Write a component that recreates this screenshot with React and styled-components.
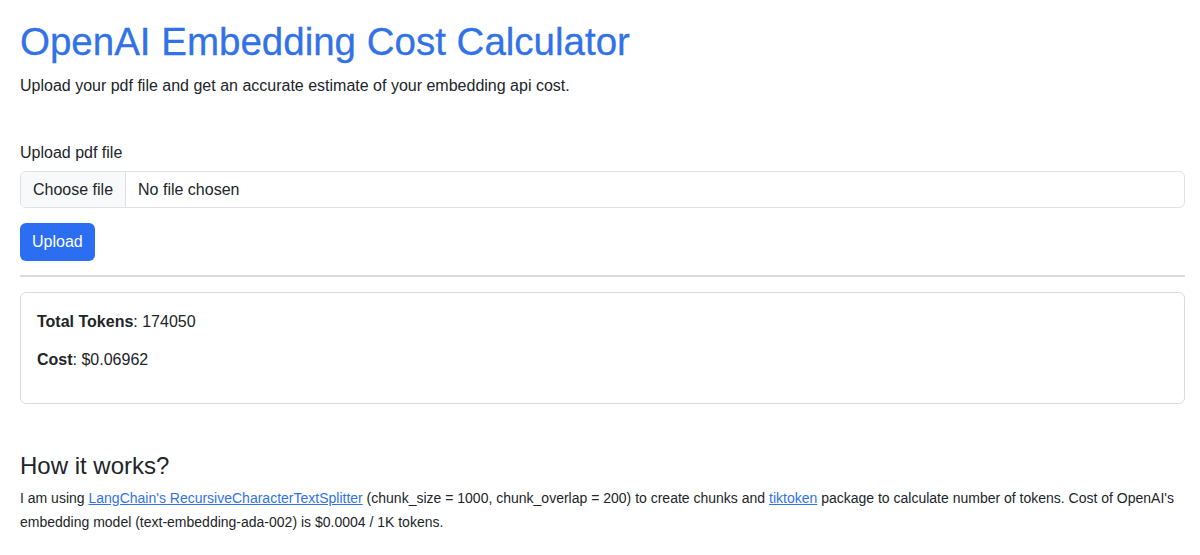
import React from "react";
import styled, { createGlobalStyle } from "styled-components";

const Global = createGlobalStyle`
  html, body { margin: 0; padding: 0; background: #fff; }
  body {
    font-family: "Liberation Sans", Arial, sans-serif;
    color: #212529;
    -webkit-font-smoothing: antialiased;
  }
  * { box-sizing: border-box; }
`;

const Page = styled.main`
  padding: 18px 15px 0 20px;
  display: flex;
  flex-direction: column;
`;

const Title = styled.h1`
  margin: 0;
  font-size: 38.5px;
  font-weight: 400;
  line-height: 48px;
  color: #3272e8;
  -webkit-text-stroke: 0.3px #3272e8;
`;

const Lead = styled.p`
  margin: 8px 0 0;
  font-size: 16px;
  line-height: 24px;
`;

const Form = styled.form`
  margin-top: 43px;
  display: flex;
  flex-direction: column;
`;

const Label = styled.label`
  font-size: 16px;
  line-height: 24px;
  margin-bottom: 6px;
`;

const FileInput = styled.div`
  display: flex;
  height: 37px;
  border: 1px solid #dee2e6;
  border-radius: 6px;
  overflow: hidden;
  font-size: 16px;
`;

const ChooseButton = styled.span`
  display: flex;
  align-items: center;
  padding: 0 12px;
  background: #f8f9fa;
  border-right: 1px solid #dee2e6;
`;

const FileName = styled.span`
  display: flex;
  align-items: center;
  padding: 0 12px;
`;

const PrimaryButton = styled.button`
  margin-top: 15px;
  align-self: flex-start;
  height: 38px;
  padding: 0 12px;
  border: none;
  border-radius: 6px;
  background: #2b6ef2;
  color: #fff;
  font-family: inherit;
  font-size: 16px;
`;

const Rule = styled.hr`
  margin: 14px 0 0;
  border: 0;
  border-top: 2px solid #dcdcdc;
`;

const Card = styled.section`
  margin-top: 15px;
  border: 1px solid #dcdcdc;
  border-radius: 6px;
  padding: 17px 16px 18px;
`;

const Stats = styled.div`
  display: flex;
  flex-direction: column;
  gap: 14px;
  padding-bottom: 13px;
`;

const Stat = styled.p`
  margin: 0;
  font-size: 16px;
  line-height: 24px;
  b { font-weight: 700; }
`;

const Heading = styled.h2`
  margin: 47px 0 0;
  font-size: 24px;
  font-weight: 400;
  line-height: 30px;
`;

const Body = styled.p`
  margin: 5px 0 0;
  font-size: 14px;
  line-height: 24px;
`;

const Link = styled.a`
  color: #3272e8;
  text-decoration: underline;
`;

export default function App() {
  return (
    <>
      <Global />
      <Page>
        <Title>OpenAI Embedding Cost Calculator</Title>
        <Lead>Upload your pdf file and get an accurate estimate of your embedding api cost.</Lead>
        <Form onSubmit={(e) => e.preventDefault()}>
          <Label>Upload pdf file</Label>
          <FileInput>
            <ChooseButton>Choose file</ChooseButton>
            <FileName>No file chosen</FileName>
          </FileInput>
          <PrimaryButton type="submit">Upload</PrimaryButton>
        </Form>
        <Rule />
        <Card>
          <Stats>
            <Stat><b>Total Tokens</b>: 174050</Stat>
            <Stat><b>Cost</b>: $0.06962</Stat>
          </Stats>
        </Card>
        <Heading>How it works?</Heading>
        <Body>
          I am using <Link href="#">LangChain's RecursiveCharacterTextSplitter</Link> (chunk_size = 1000, chunk_overlap = 200) to create chunks and <Link href="#">tiktoken</Link> package to calculate number of tokens. Cost of OpenAI's embedding model (text-embedding-ada-002) is $0.0004 / 1K tokens.
        </Body>
      </Page>
    </>
  );
}
